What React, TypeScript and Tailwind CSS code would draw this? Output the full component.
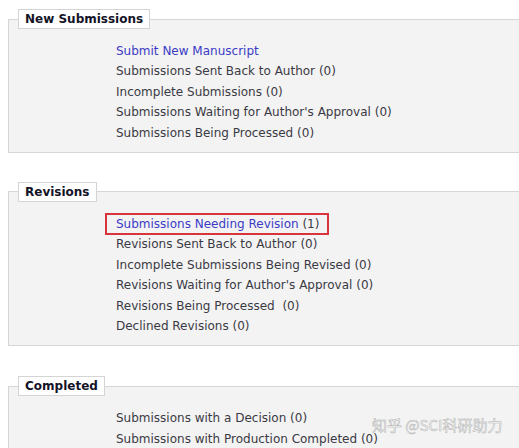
import React from "react";

type Item = { label: string; count?: string; link?: boolean; marked?: boolean };

const sections: { title: string; gap: string; items: Item[] }[] = [
  {
    title: "New Submissions",
    gap: "mt-0",
    items: [
      { label: "Submit New Manuscript", link: true },
      { label: "Submissions Sent Back to Author", count: "(0)" },
      { label: "Incomplete Submissions", count: "(0)" },
      { label: "Submissions Waiting for Author's Approval", count: "(0)" },
      { label: "Submissions Being Processed", count: "(0)" },
    ],
  },
  {
    title: "Revisions",
    gap: "mt-[29px]",
    items: [
      { label: "Submissions Needing Revision", count: "(1)", link: true, marked: true },
      { label: "Revisions Sent Back to Author", count: "(0)" },
      { label: "Incomplete Submissions Being Revised", count: "(0)" },
      { label: "Revisions Waiting for Author's Approval", count: "(0)" },
      { label: "Revisions Being Processed ", count: " (0)" },
      { label: "Declined Revisions", count: "(0)" },
    ],
  },
  {
    title: "Completed",
    gap: "mt-[30px]",
    items: [
      { label: "Submissions with a Decision", count: "(0)" },
      { label: "Submissions with Production Completed", count: "(0)" },
    ],
  },
];

function Row({ item }: { item: Item }) {
  const body = (
    <>
      <span className={item.link ? "text-[#3b3bc6]" : ""}>{item.label}</span>
      {item.count ? <span className="whitespace-pre"> {item.count.trim()}</span> : null}
    </>
  );
  if (item.marked) {
    return (
      <div className="h-[20.4px]">
        <span className="relative inline-block">
          {body}
          <span className="pointer-events-none absolute left-[-11px] right-[-10px] top-[-1px] bottom-[-1px] border-2 border-[#d8343c]" />
        </span>
      </div>
    );
  }
  return <div className="h-[20.4px] whitespace-pre">{body}</div>;
}

function Section({ title, gap, items }: { title: string; gap: string; items: Item[] }) {
  return (
    <fieldset
      className={`${gap} ml-[8px] w-[560px] border border-[#d6d6d6] bg-[#f3f3f3] px-0 pb-[9px] pt-[12px]`}
    >
      <legend className="ml-[9px] h-[20px] border border-[#d4d4d4] bg-white px-[6px] text-[12px] font-bold leading-[18px] text-[#141428]">
        {title}
      </legend>
      <div className="pl-[107px] text-[12px] leading-[20.4px] text-[#3a3a44]">
        {items.map((it) => (
          <Row key={it.label} item={it} />
        ))}
      </div>
    </fieldset>
  );
}

export default function App() {
  return (
    <div
      className="relative h-[448px] w-[519px] overflow-hidden bg-white pt-[9px]"
      style={{ fontFamily: '"DejaVu Sans", Verdana, sans-serif' }}
    >
      <div className="flex flex-col">
        {sections.map((s) => (
          <Section key={s.title} title={s.title} gap={s.gap} items={s.items} />
        ))}
      </div>
      <div
        className="absolute left-[372px] top-[415px] whitespace-nowrap text-[15px] leading-[20px] text-[#fbfbfb] [-webkit-text-stroke:0.5px_#b0b0b0]"
        style={{ fontFamily: '"Noto Sans CJK SC", "Noto Sans", sans-serif' }}
      >
        知乎 @SCI科研助力
      </div>
    </div>
  );
}
